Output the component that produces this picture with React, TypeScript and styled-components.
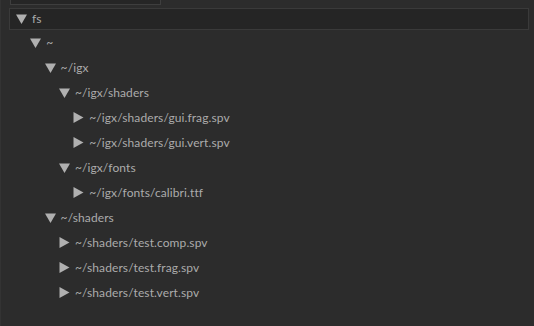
import { createGlobalStyle } from 'styled-components'
import styled from 'styled-components'

const GlobalStyle = createGlobalStyle`
  html, body {
    margin: 0;
    padding: 0;
    background: #2c2c2c;
  }
  body {
    font-family: Lato, "Open Sans", sans-serif;
  }
`

const Window = styled.div`
  width: 534px;
  height: 326px;
  background: #2c2c2c;
  overflow: hidden;
  display: flex;
  flex-direction: column;
  border-left: 1px solid #333333;
  box-sizing: border-box;
`

const TopBox = styled.div`
  margin-left: 9px;
  width: 151px;
  height: 5px;
  border: 1px solid #3e3e3e;
  border-top: none;
  background: #262626;
  box-sizing: border-box;
`

const Header = styled.div`
  margin: 3px 0 0 8px;
  width: 520px;
  height: 22px;
  box-sizing: border-box;
  border: 1px solid #3a3a3a;
  background: #252525;
  display: flex;
  align-items: center;
  padding-left: 6px;
  gap: 5px;
`

const Tree = styled.div`
  display: flex;
  flex-direction: column;
  padding-top: 0px;
`

const Row = styled.div<{ $level: number }>`
  height: 25px;
  display: flex;
  align-items: center;
  padding-left: ${p => 15 + p.$level * 14.3}px;
  gap: 5px;
`

const Label = styled.span`
  color: #ababab;
  font-size: 12px;
  line-height: 1;
  letter-spacing: 0.1px;
  white-space: nowrap;
`

function Arrow({ open }: { open: boolean }) {
  return open ? (
    <svg width="11" height="10" viewBox="0 0 11 10" style={{ flexShrink: 0 }}>
      <polygon points="0,0.5 11,0.5 5.5,10" fill="#b0b0b0" />
    </svg>
  ) : (
    <svg width="11" height="11" viewBox="0 0 11 11" style={{ flexShrink: 0 }}>
      <polygon points="0.5,0 10.5,5.5 0.5,11" fill="#b0b0b0" />
    </svg>
  )
}

const items: { level: number; open: boolean; label: string }[] = [
  { level: 1, open: true, label: '~' },
  { level: 2, open: true, label: '~/igx' },
  { level: 3, open: true, label: '~/igx/shaders' },
  { level: 4, open: false, label: '~/igx/shaders/gui.frag.spv' },
  { level: 4, open: false, label: '~/igx/shaders/gui.vert.spv' },
  { level: 3, open: true, label: '~/igx/fonts' },
  { level: 4, open: false, label: '~/igx/fonts/calibri.ttf' },
  { level: 2, open: true, label: '~/shaders' },
  { level: 3, open: false, label: '~/shaders/test.comp.spv' },
  { level: 3, open: false, label: '~/shaders/test.frag.spv' },
  { level: 3, open: false, label: '~/shaders/test.vert.spv' },
]

function App() {
  return (
    <Window>
      <GlobalStyle />
      <TopBox />
      <Header>
        <Arrow open />
        <Label>fs</Label>
      </Header>
      <Tree>
        {items.map((it, i) => (
          <Row key={i} $level={it.level}>
            <Arrow open={it.open} />
            <Label>{it.label}</Label>
          </Row>
        ))}
      </Tree>
    </Window>
  )
}

export default App
